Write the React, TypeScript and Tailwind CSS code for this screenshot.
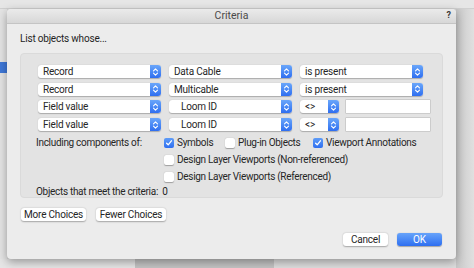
import React from "react";

const font = { fontFamily: '"Roboto", "Liberation Sans", sans-serif' };

function Stepper() {
  return (
    <div className="w-[11px] h-full rounded-r-[3px] bg-gradient-to-b from-[#6aa6fa] to-[#2f6ef0] flex items-center justify-center">
      <svg width="7" height="10" viewBox="0 0 7 10" fill="none">
        <path d="M1.5 3.8 L3.5 1.8 L5.5 3.8" stroke="white" strokeWidth="1.1" strokeLinecap="round" strokeLinejoin="round" />
        <path d="M1.5 6.2 L3.5 8.2 L5.5 6.2" stroke="white" strokeWidth="1.1" strokeLinecap="round" strokeLinejoin="round" />
      </svg>
    </div>
  );
}

function Select({ label, width, indent = false }: { label: string; width: string; indent?: boolean }) {
  return (
    <div className={`${width} h-[13px] flex bg-white rounded-[3px] shadow-[0_0.5px_1px_rgba(0,0,0,0.25)]`}>
      <span className={`flex-1 whitespace-nowrap leading-[13px] text-[10px] tracking-[-0.2px] text-[#262626] ${indent ? "pl-[12px]" : "pl-[5px]"}`}>{label}</span>
      <Stepper />
    </div>
  );
}

function Check({ checked, label, width = "" }: { checked?: boolean; label: string; width?: string }) {
  return (
    <div className={`${width} flex items-center gap-[3px]`}>
      {checked ? (
        <div className="w-[10px] h-[10px] shrink-0 rounded-[2px] bg-gradient-to-b from-[#5f9cf7] to-[#2f6ef0] flex items-center justify-center">
          <svg width="8" height="8" viewBox="0 0 8 8" fill="none">
            <path d="M1.6 4.2 L3.2 5.8 L6.4 1.8" stroke="white" strokeWidth="1.3" strokeLinecap="round" strokeLinejoin="round" />
          </svg>
        </div>
      ) : (
        <div className="w-[10px] h-[10px] shrink-0 rounded-[2px] bg-white shadow-[0_0.5px_1px_rgba(0,0,0,0.3)]" />
      )}
      <span className="whitespace-nowrap text-[10px] tracking-[-0.3px] text-[#262626] leading-[12px]">{label}</span>
    </div>
  );
}

function Button({ label, width }: { label: string; width: string }) {
  return (
    <div className={`${width} h-[13px] bg-white rounded-[3px] shadow-[0_0.5px_1.5px_rgba(0,0,0,0.3)] flex items-center justify-center whitespace-nowrap text-[10px] tracking-[-0.2px] text-[#262626]`}>
      {label}
    </div>
  );
}

export default function App() {
  return (
    <div className="w-[474px] h-[268px] relative overflow-hidden bg-[#d6d6d6]" style={font}>
      {/* desktop backdrop */}
      <div className="absolute left-0 top-0 w-[474px] h-[9px] bg-[#e6e6e6] border-b border-[#d0d0d0]" />
      <div className="absolute left-0 top-[9px] w-[7px] h-[259px] bg-[#e4e4e4]" />
      <div className="absolute left-0 top-[62px] w-[7px] h-[11px] bg-[#3f78d8]" />
      <div className="absolute left-0 top-[259px] w-[135px] h-[9px] bg-[#e6e6e6]" />
      <div className="absolute left-[135px] top-[259px] w-[139px] h-[9px] bg-[#c4c4c4]" />
      <div className="absolute left-[274px] top-[259px] w-[200px] h-[9px] bg-[#dedede]" />
      <div className="absolute left-[456px] top-[9px] w-[18px] h-[259px] bg-gradient-to-r from-[#c8c8c8] to-[#e0e0e0]" />

      {/* dialog window */}
      <div className="absolute left-[7px] top-[9px] w-[449px] h-[250px] bg-[#ececec] rounded-[4px] shadow-[0_3px_10px_rgba(0,0,0,0.35)] flex flex-col overflow-hidden">
        <div className="h-[15px] bg-gradient-to-b from-[#ebebeb] to-[#d7d7d7] border-b border-[#c4c4c4] relative flex items-center justify-center">
          <span className="text-[10.5px] text-[#4a4a4a] leading-none">Criteria</span>
          <span className="absolute right-[5px] top-[2px] text-[9px] font-bold text-[#3a3a3a] leading-none">?</span>
        </div>

        <div className="flex flex-col px-[13px] pt-[8px]">
          <div className="whitespace-nowrap text-[10px] tracking-[-0.2px] text-[#1f1f1f] leading-[13px]">List objects whose...</div>

          <div className="mt-[8px] h-[145px] bg-[#e3e3e3] border border-[#dadada] rounded-[4px] pl-[17px] pt-[11px] flex flex-col">
            <div className="flex flex-col gap-[4.7px]">
              <div className="flex gap-[8px]">
                <Select label="Record" width="w-[123px]" />
                <Select label="Data Cable" width="w-[123px]" />
                <Select label="is present" width="w-[123px]" />
              </div>
              <div className="flex gap-[8px]">
                <Select label="Record" width="w-[123px]" />
                <Select label="Multicable" width="w-[123px]" />
                <Select label="is present" width="w-[123px]" />
              </div>
              <div className="flex gap-[8px]">
                <Select label="Field value" width="w-[123px]" />
                <Select label="Loom ID" width="w-[123px]" indent />
                <div className="flex gap-[7px]">
                  <Select label="<>" width="w-[39px]" />
                  <div className="w-[84px] h-[13px] bg-white shadow-[0_0_0_0.5px_rgba(0,0,0,0.2)]" />
                </div>
              </div>
              <div className="flex gap-[8px]">
                <Select label="Field value" width="w-[123px]" />
                <Select label="Loom ID" width="w-[123px]" indent />
                <div className="flex gap-[7px]">
                  <Select label="<>" width="w-[39px]" />
                  <div className="w-[84px] h-[13px] bg-white shadow-[0_0_0_0.5px_rgba(0,0,0,0.2)]" />
                </div>
              </div>
            </div>

            <div className="mt-[6px] flex">
              <div className="w-[128px] -ml-[2px] whitespace-nowrap text-[10px] tracking-[-0.3px] text-[#262626] leading-[12px]">Including components of:</div>
              <div className="flex flex-col gap-[5px]">
                <div className="flex">
                  <Check checked label="Symbols" width="w-[61px]" />
                  <Check label="Plug-in Objects" width="w-[88px]" />
                  <Check checked label="Viewport Annotations" />
                </div>
                <Check label="Design Layer Viewports (Non-referenced)" />
                <Check label="Design Layer Viewports (Referenced)" />
              </div>
            </div>

            <div className="mt-[3px] -ml-[2px] whitespace-nowrap text-[10px] tracking-[-0.3px] text-[#262626] leading-[12px]">Objects that meet the criteria:&nbsp; 0</div>
          </div>

          <div className="mt-[10px] flex gap-[10px] pl-[1px]">
            <Button label="More Choices" width="w-[65px]" />
            <Button label="Fewer Choices" width="w-[70px]" />
          </div>

          <div className="mt-[12px] flex justify-end gap-[9px] pr-[1px]">
            <Button label="Cancel" width="w-[45px]" />
            <div className="w-[45px] h-[13px] rounded-[3px] bg-gradient-to-b from-[#67a3fa] to-[#2e6ef0] flex items-center justify-center text-[10px] text-white shadow-[0_0.5px_1px_rgba(0,0,0,0.3)]">
              OK
            </div>
          </div>
        </div>
      </div>
    </div>
  );
}
